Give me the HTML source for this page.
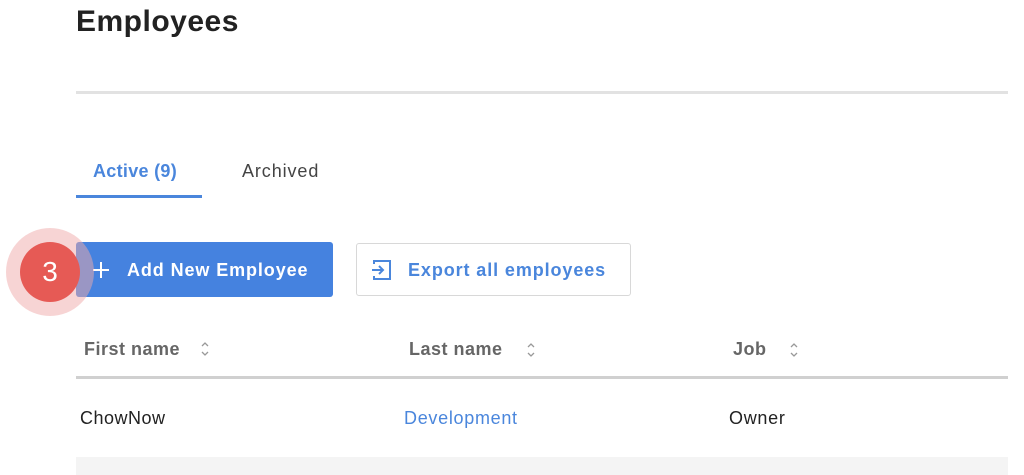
<!DOCTYPE html><html><head><style>
body{margin:0;width:1024px;height:475px;background:#fff;font-family:"Liberation Sans",sans-serif;position:relative;overflow:hidden}
.a{position:absolute}
.s{position:absolute}
</style></head><body>
<div class="a" style="left:76px;top:5px;font-size:30px;font-weight:bold;color:#222;letter-spacing:0.5px">Employees</div>
<div class="a" style="left:76px;top:91px;width:932px;height:3px;background:#e2e2e2"></div>
<div class="a" style="left:93px;top:161px;font-size:18px;font-weight:bold;color:#4a86dc;letter-spacing:0.3px">Active (9)</div>
<div class="a" style="left:76px;top:195px;width:126px;height:3px;background:#4a86dc"></div>
<div class="a" style="left:242px;top:161px;font-size:18px;color:#444;letter-spacing:0.9px">Archived</div>
<div class="a" style="left:76px;top:242px;width:257px;height:55px;background:#4582df;border-radius:3px"></div>
<svg class="a" style="left:93px;top:262px" width="16" height="16" viewBox="0 0 16 16" stroke="#fff" stroke-width="2"><path d="M8 0v16M0 8h16"/></svg>
<div class="a" style="left:127px;top:260px;font-size:18px;font-weight:bold;color:#fff;letter-spacing:0.9px">Add New Employee</div>
<div class="a" style="left:356px;top:243px;width:273px;height:51px;border:1px solid #d8d8d8;border-radius:3px"></div>
<svg class="a" style="left:370px;top:259px" width="24" height="22" viewBox="0 0 24 22" fill="none" stroke="#4a86dc" stroke-width="2"><path d="M4 5V2h16v18H4v-3M2 11h11M9 7l4 4-4 4"/></svg>
<div class="a" style="left:408px;top:260px;font-size:18px;font-weight:bold;color:#4a86dc;letter-spacing:0.9px">Export all employees</div>
<div class="a" style="left:6px;top:228px;width:88px;height:88px;border-radius:50%;background:rgba(240,170,170,.5)"></div>
<div class="a" style="left:20px;top:242px;width:60px;height:60px;border-radius:50%;background:#e65a55;color:#fff;font-size:28px;text-align:center;line-height:60px">3</div>
<div class="a" style="left:84px;top:339px;font-size:18px;font-weight:bold;color:#666;letter-spacing:0.5px">First name</div>
<div class="a" style="left:409px;top:339px;font-size:18px;font-weight:bold;color:#666;letter-spacing:0.5px">Last name</div>
<div class="a" style="left:733px;top:339px;font-size:18px;font-weight:bold;color:#666;letter-spacing:0.5px">Job</div>
<svg class="a" style="left:200px;top:340px" width="10" height="18" viewBox="0 0 10 18" fill="none" stroke="#999" stroke-width="1.3"><path d="M2 6l3-3 3 3M2 12l3 3 3-3"/></svg>
<svg class="a" style="left:526px;top:341px" width="10" height="18" viewBox="0 0 10 18" fill="none" stroke="#999" stroke-width="1.3"><path d="M2 6l3-3 3 3M2 12l3 3 3-3"/></svg>
<svg class="a" style="left:789px;top:341px" width="10" height="18" viewBox="0 0 10 18" fill="none" stroke="#999" stroke-width="1.3"><path d="M2 6l3-3 3 3M2 12l3 3 3-3"/></svg>
<div class="a" style="left:76px;top:376px;width:932px;height:3px;background:#d0d0d0"></div>
<div class="a" style="left:80px;top:408px;font-size:18px;color:#222;letter-spacing:0.5px">ChowNow</div>
<div class="a" style="left:404px;top:408px;font-size:18px;color:#4a86dc;letter-spacing:0.7px">Development</div>
<div class="a" style="left:729px;top:408px;font-size:18px;color:#222;letter-spacing:0.7px">Owner</div>
<div class="a" style="left:76px;top:457px;width:932px;height:18px;background:#f4f4f4"></div>
</body></html>
